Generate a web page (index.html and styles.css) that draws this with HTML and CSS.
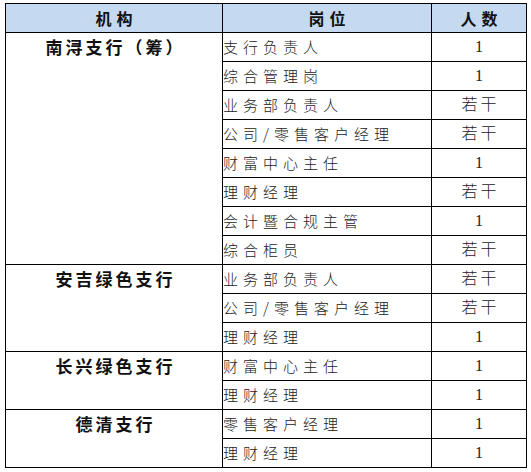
FILE: index.html
```html
<!DOCTYPE html>
<html lang="zh-CN">
<head>
<meta charset="utf-8">
<link rel="stylesheet" href="styles.css">
</head>
<body>
<div class="wrap">
<table class="staff">
  <colgroup>
    <col class="c-org">
    <col class="c-pos">
    <col class="c-num">
  </colgroup>
  <thead>
    <tr><th>机构</th><th>岗位</th><th>人数</th></tr>
  </thead>
  <tbody>
    <tr><td class="org" rowspan="8">南浔支行（筹）</td><td class="pos">支行负责人</td><td class="num">1</td></tr>
    <tr><td class="pos">综合管理岗</td><td class="num">1</td></tr>
    <tr><td class="pos">业务部负责人</td><td class="num">若干</td></tr>
    <tr><td class="pos">公司/零售客户经理</td><td class="num">若干</td></tr>
    <tr><td class="pos">财富中心主任</td><td class="num">1</td></tr>
    <tr><td class="pos">理财经理</td><td class="num">若干</td></tr>
    <tr><td class="pos">会计暨合规主管</td><td class="num">1</td></tr>
    <tr><td class="pos">综合柜员</td><td class="num">若干</td></tr>
    <tr><td class="org" rowspan="3">安吉绿色支行</td><td class="pos">业务部负责人</td><td class="num">若干</td></tr>
    <tr><td class="pos">公司/零售客户经理</td><td class="num">若干</td></tr>
    <tr><td class="pos">理财经理</td><td class="num">1</td></tr>
    <tr><td class="org" rowspan="2">长兴绿色支行</td><td class="pos">财富中心主任</td><td class="num">1</td></tr>
    <tr><td class="pos">理财经理</td><td class="num">1</td></tr>
    <tr><td class="org" rowspan="2">德清支行</td><td class="pos">零售客户经理</td><td class="num">1</td></tr>
    <tr><td class="pos">理财经理</td><td class="num">1</td></tr>
  </tbody>
</table>
</div>
</body>
</html>
```
FILE: styles.css
```css
html, body {
  margin: 0;
  padding: 0;
  background: #ffffff;
}
.wrap {
  padding: 3px 0 0 5px;
}
.staff {
  border-collapse: collapse;
  table-layout: fixed;
  width: 521px;
  font-family: "Noto Sans CJK SC", sans-serif;
  color: #1a1a1a;
}
.c-org { width: 217px; }
.c-pos { width: 209px; }
.c-num { width: 95px; }
.staff th,
.staff td {
  border: 1px solid #000;
  height: 29px;
  padding: 0;
  box-sizing: border-box;
  line-height: 28px;
  white-space: nowrap;
  overflow: hidden;
}
.staff th {
  background: #c5d9f1;
  font-size: 16px;
  font-weight: 700;
  letter-spacing: 5px;
  text-indent: 5px;
  color: #111;
  text-align: center;
}
.org {
  vertical-align: top;
  text-align: center;
  font-size: 17px;
  font-weight: 700;
  letter-spacing: 3px;
  text-indent: 3px;
  color: #111;
}
.pos {
  text-align: left;
  padding-left: 2px;
  font-size: 15px;
  font-weight: 300;
  letter-spacing: 5px;
  color: #222;
}
.num {
  text-align: center;
  font-family: "Liberation Serif", "Noto Sans CJK SC", serif;
  font-size: 16px;
  font-weight: 300;
  letter-spacing: 3px;
  text-indent: 3px;
  color: #222;
}
```
